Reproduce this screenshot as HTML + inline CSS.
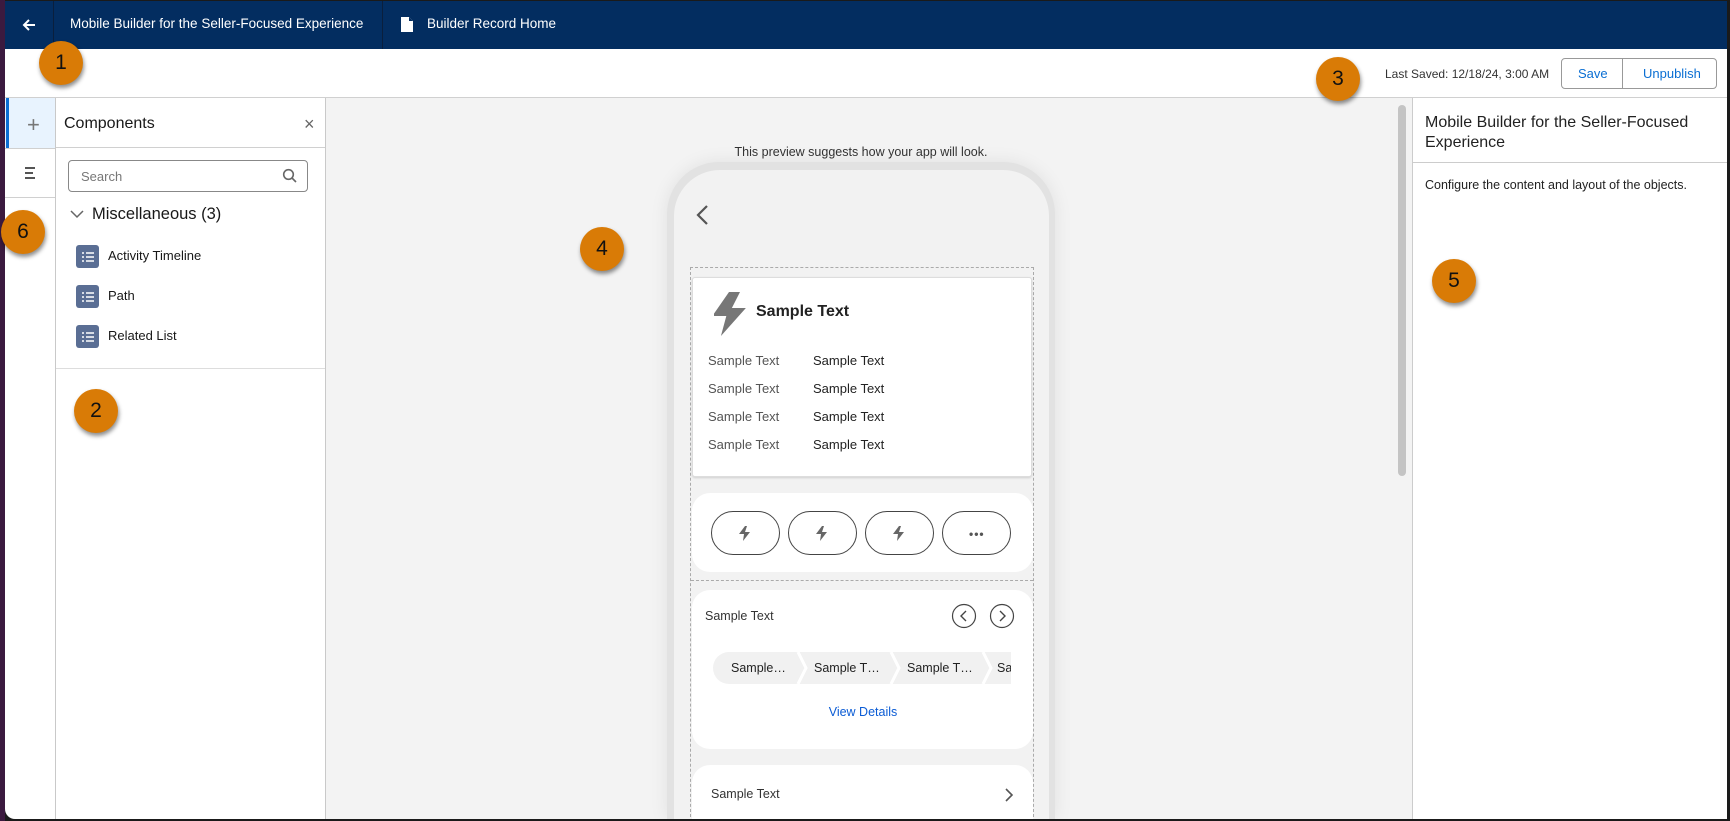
<!DOCTYPE html>
<html style="overflow:hidden"><head><meta charset="utf-8"><style>
*{margin:0;padding:0;box-sizing:border-box}
html,body{width:1730px;height:821px;overflow:hidden}
body{background:#1a1a1a;font-family:"Liberation Sans",sans-serif;position:relative;color:#181818}
.a{position:absolute}
.app{position:absolute;left:5px;top:1px;width:1722px;height:818px;background:#fff;overflow:hidden;border-radius:0 0 0 10px}
.circ{position:absolute;width:44px;height:44px;border-radius:50%;background:#d97b06;box-shadow:1px 3px 4px rgba(0,0,0,.45);color:#111;font-size:21px;text-align:center;line-height:44px;z-index:10}
.row{position:absolute;font-size:13px;color:#555}
.btn{position:absolute;top:510px;width:69px;height:44px;border:1.3px solid #444;border-radius:22px;background:#fff}
</style></head><body>
<div class="a" style="left:0;top:0;width:5px;height:821px;background:#3b1a3f"></div>
<div class="app">
 <div class="a" style="left:0;top:0;width:1722px;height:48px;background:#032d60"></div>
 <div class="a" style="left:48px;top:0;width:1px;height:48px;background:#0a1f3d"></div>
 <div class="a" style="left:377px;top:0;width:1px;height:48px;background:#0a1f3d"></div>
 <svg class="a" style="left:16px;top:16px" width="16" height="16" viewBox="0 0 16 16"><path d="M14 8H3M8 3L3 8l5 5" stroke="#fff" stroke-width="2" fill="none"/></svg>
 <div class="a" style="left:65px;top:15px;color:#fff;font-size:13.5px">Mobile Builder for the Seller-Focused Experience</div>
 <svg class="a" style="left:395px;top:15px" width="14" height="17" viewBox="0 0 14 17"><path d="M1 1h8l4 4v11H1z" fill="#fff"/><path d="M9 1v4h4" fill="#032d60"/></svg>
 <div class="a" style="left:422px;top:15px;color:#fff;font-size:13.5px">Builder Record Home</div>
 <div class="a" style="left:0;top:96px;width:1722px;height:1px;background:#d0d0d0"></div>
 <div class="a" style="left:1380px;top:66px;font-size:12px;color:#333">Last Saved: 12/18/24, 3:00 AM</div>
 <div class="a" style="left:1556px;top:57px;width:156px;height:31px;border:1px solid #999;border-radius:4px"></div>
 <div class="a" style="left:1617px;top:57px;width:1px;height:31px;background:#999"></div>
 <div class="a" style="left:1573px;top:65px;font-size:13px;color:#0b6fd3">Save</div>
 <div class="a" style="left:1638px;top:65px;font-size:13px;color:#0b6fd3">Unpublish</div>
 <div class="a" style="left:0;top:97px;width:50px;height:50px;background:#e8f3fe"></div>
 <div class="a" style="left:1px;top:97px;width:3px;height:50px;background:#0b6fd3"></div>
 <div class="a" style="left:22px;top:111px;font-size:22px;color:#777;font-weight:300">+</div>
 <div class="a" style="left:0;top:147px;width:50px;height:1px;background:#d0d0d0"></div>
 <div class="a" style="left:20px;top:166px;width:10px;height:2px;background:#555"></div>
 <div class="a" style="left:20px;top:171px;width:8px;height:2px;background:#555"></div>
 <div class="a" style="left:20px;top:176px;width:10px;height:2px;background:#555"></div>
 <div class="a" style="left:0;top:196px;width:50px;height:1px;background:#d0d0d0"></div>
 <div class="a" style="left:50px;top:97px;width:1px;height:721px;background:#c9c9c9"></div>
 <div class="a" style="left:59px;top:114px;font-size:16px">Components</div>
 <div class="a" style="left:299px;top:113px;font-size:18px;color:#666">×</div>
 <div class="a" style="left:51px;top:146px;width:269px;height:1px;background:#d0d0d0"></div>
 <div class="a" style="left:63px;top:159px;width:240px;height:32px;border:1px solid #888;border-radius:4px"></div>
 <div class="a" style="left:76px;top:168px;font-size:13px;color:#777">Search</div>
 <svg class="a" style="left:277px;top:167px" width="16" height="16" viewBox="0 0 16 16"><circle cx="6.5" cy="6.5" r="4.8" stroke="#666" stroke-width="1.6" fill="none"/><path d="M10 10l4 4" stroke="#666" stroke-width="1.6"/></svg>
 <svg class="a" style="left:65px;top:208px" width="14" height="10" viewBox="0 0 14 10"><path d="M1 2l6 6 6-6" stroke="#666" stroke-width="1.5" fill="none"/></svg>
 <div class="a" style="left:87px;top:204px;font-size:16.5px">Miscellaneous (3)</div>
 <div class="a" style="left:71px;top:244px;width:23px;height:23px;background:#5a6e94;border-radius:3px"></div>
 <div class="a" style="left:71px;top:284px;width:23px;height:23px;background:#5a6e94;border-radius:3px"></div>
 <div class="a" style="left:71px;top:324px;width:23px;height:23px;background:#5a6e94;border-radius:3px"></div>
 <svg class="a" style="left:77px;top:250px" width="12" height="12"><path d="M0 2h2M4 2h8M0 6h2M4 6h8M0 10h2M4 10h8" stroke="#fff" stroke-width="1.4"/></svg>
 <svg class="a" style="left:77px;top:290px" width="12" height="12"><path d="M0 2h2M4 2h8M0 6h2M4 6h8M0 10h2M4 10h8" stroke="#fff" stroke-width="1.4"/></svg>
 <svg class="a" style="left:77px;top:330px" width="12" height="12"><path d="M0 2h2M4 2h8M0 6h2M4 6h8M0 10h2M4 10h8" stroke="#fff" stroke-width="1.4"/></svg>
 <div class="a" style="left:103px;top:247px;font-size:13px">Activity Timeline</div>
 <div class="a" style="left:103px;top:287px;font-size:13px">Path</div>
 <div class="a" style="left:103px;top:327px;font-size:13px">Related List</div>
 <div class="a" style="left:51px;top:367px;width:269px;height:1px;background:#ddd"></div>
 <div class="a" style="left:320px;top:97px;width:1px;height:721px;background:#c9c9c9"></div>
 <div class="a" style="left:321px;top:97px;width:1087px;height:721px;background:#f3f3f3"></div>
 <div class="a" style="left:1393px;top:104px;width:8px;height:371px;background:#c4c4c4;border-radius:4px"></div>
 <div class="a" style="left:1407px;top:97px;width:1px;height:721px;background:#ccc"></div>
 <div class="a" style="left:671px;top:144px;width:370px;text-align:center;font-size:12.5px;color:#333">This preview suggests how your app will look.</div>
 <div class="a" style="left:662px;top:161px;width:388px;height:657px;background:#e2e2e2;border-radius:52px 52px 0 0;box-shadow:0 0 18px rgba(0,0,0,.08)"></div>
 <div class="a" style="left:669px;top:169px;width:375px;height:649px;background:#f2f2f2;border-radius:46px 46px 0 0"></div>
 <svg class="a" style="left:690px;top:203px" width="16" height="22" viewBox="0 0 16 22"><path d="M12 2L3 11l9 9" stroke="#555" stroke-width="2.2" fill="none"/></svg>
 <div class="a" style="left:685px;top:266px;width:344px;height:560px;border:1px dashed #aaa"></div>
 <div class="a" style="left:686px;top:579px;width:342px;height:0;border-top:1px dashed #aaa"></div>
 <div class="a" style="left:687px;top:276px;width:340px;height:200px;background:#fff;border:1px solid #ddd;border-radius:3px;box-shadow:0 1px 2px rgba(0,0,0,.15)"></div>
 <svg class="a" style="left:709px;top:291px" width="34" height="44" viewBox="0 0 34 44"><path d="M15 0L0 24h14l-4 20 23-28H19l7-16z" fill="#777" transform="skewX(-4)"/></svg>
 <div class="a" style="left:751px;top:302px;font-size:16px;font-weight:bold;color:#222">Sample Text</div>
 <div class="row" style="left:703px;top:352px">Sample Text</div><div class="row" style="left:808px;top:352px;color:#222">Sample Text</div>
 <div class="row" style="left:703px;top:380px">Sample Text</div><div class="row" style="left:808px;top:380px;color:#222">Sample Text</div>
 <div class="row" style="left:703px;top:408px">Sample Text</div><div class="row" style="left:808px;top:408px;color:#222">Sample Text</div>
 <div class="row" style="left:703px;top:436px">Sample Text</div><div class="row" style="left:808px;top:436px;color:#222">Sample Text</div>
 <div class="a" style="left:687px;top:492px;width:341px;height:79px;background:#fff;border-radius:18px"></div>
 <div class="btn" style="left:706px"></div><div class="btn" style="left:783px"></div><div class="btn" style="left:860px"></div><div class="btn" style="left:937px"></div>
 <svg class="a" style="left:733px;top:525px" width="14" height="15" viewBox="0 0 14 15"><path d="M7 0L1 8h5l-1 7 7-9H7l2-6z" fill="#666"/></svg>
 <svg class="a" style="left:810px;top:525px" width="14" height="15" viewBox="0 0 14 15"><path d="M7 0L1 8h5l-1 7 7-9H7l2-6z" fill="#666"/></svg>
 <svg class="a" style="left:887px;top:525px" width="14" height="15" viewBox="0 0 14 15"><path d="M7 0L1 8h5l-1 7 7-9H7l2-6z" fill="#666"/></svg>
 <div class="a" style="left:964px;top:526px;font-size:12px;color:#555;letter-spacing:1px;font-weight:bold">•••</div>
 <div class="a" style="left:687px;top:589px;width:341px;height:159px;background:#fff;border-radius:18px"></div>
 <div class="a" style="left:700px;top:608px;font-size:12.5px;color:#333">Sample Text</div>
 <svg class="a" style="left:946px;top:602px" width="26" height="26" viewBox="0 0 26 26"><circle cx="13" cy="13" r="11.5" stroke="#444" fill="none" stroke-width="1.2"/><path d="M15 8l-5 5 5 5" stroke="#444" fill="none" stroke-width="1.4"/></svg>
 <svg class="a" style="left:984px;top:602px" width="26" height="26" viewBox="0 0 26 26"><circle cx="13" cy="13" r="11.5" stroke="#444" fill="none" stroke-width="1.2"/><path d="M11 8l5 5-5 5" stroke="#444" fill="none" stroke-width="1.4"/></svg>
 <div class="a" style="left:708px;top:651px;width:298px;height:32px;background:#f1f1f1;border-radius:16px 0 0 16px;overflow:hidden">
  <svg class="a" style="left:0;top:0" width="298" height="32"><path d="M85 0l8 16-8 16M178 0l8 16-8 16M270 0l8 16-8 16" stroke="#fff" stroke-width="3" fill="none"/></svg>
  <div class="a" style="left:18px;top:9px;font-size:12.5px;color:#222">Sample…</div>
  <div class="a" style="left:101px;top:9px;font-size:12.5px;color:#222">Sample T…</div>
  <div class="a" style="left:194px;top:9px;font-size:12.5px;color:#222">Sample T…</div>
  <div class="a" style="left:284px;top:9px;font-size:12.5px;color:#222">Sa</div>
 </div>
 <div class="a" style="left:686px;top:704px;width:344px;text-align:center;font-size:12.5px;color:#0b5cd5">View Details</div>
 <div class="a" style="left:687px;top:764px;width:341px;height:60px;background:#fff;border-radius:18px 18px 0 0"></div>
 <div class="a" style="left:706px;top:786px;font-size:12.5px;color:#333">Sample Text</div>
 <svg class="a" style="left:999px;top:786px" width="10" height="16" viewBox="0 0 10 16"><path d="M2 2l6 6-6 6" stroke="#555" stroke-width="1.6" fill="none"/></svg>
 <div class="a" style="left:1420px;top:112px;font-size:16px;line-height:20px;color:#222">Mobile Builder for the Seller-Focused<br>Experience</div>
 <div class="a" style="left:1408px;top:161px;width:314px;height:1px;background:#ccc"></div>
 <div class="a" style="left:1420px;top:177px;font-size:12.5px;color:#222">Configure the content and layout of the objects.</div>
</div>
<div class="circ" style="left:39px;top:41px">1</div>
<div class="circ" style="left:74px;top:389px">2</div>
<div class="circ" style="left:1316px;top:57px">3</div>
<div class="circ" style="left:580px;top:227px">4</div>
<div class="circ" style="left:1432px;top:259px">5</div>
<div class="circ" style="left:1px;top:210px">6</div>
</body></html>
